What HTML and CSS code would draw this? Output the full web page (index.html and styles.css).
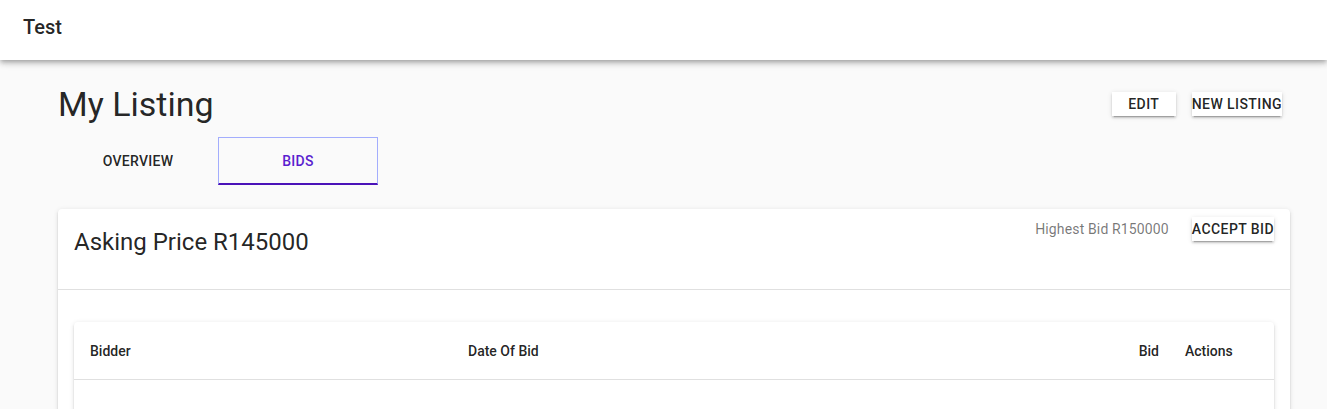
FILE: index.html
```html
<!DOCTYPE html>
<html lang="en">
<head>
<meta charset="utf-8">
<title>Test</title>
<link rel="stylesheet" href="styles.css">
</head>
<body>
<header class="app-bar">
  <div class="app-title">Test</div>
</header>
<main class="page">
  <div class="page-head">
    <h1 class="page-title">My Listing</h1>
    <div class="head-actions">
      <button class="btn btn-edit">Edit</button>
      <button class="btn">New Listing</button>
    </div>
  </div>
  <nav class="tabs">
    <div class="tab">Overview</div>
    <div class="tab tab-active">Bids</div>
  </nav>
  <section class="card">
    <div class="card-head">
      <h2 class="card-title">Asking Price R145000</h2>
      <div class="card-head-right">
        <span class="highest">Highest Bid R150000</span>
        <button class="btn btn-accept">Accept Bid</button>
      </div>
    </div>
    <div class="card-body">
      <div class="table-card">
        <div class="table-row table-header">
          <div class="cell">Bidder</div>
          <div class="cell">Date Of Bid</div>
          <div class="cell cell-bid">Bid</div>
          <div class="cell">Actions</div>
        </div>
        <div class="table-empty"></div>
      </div>
    </div>
  </section>
</main>
</body>
</html>
```
FILE: styles.css
```css
* { box-sizing: border-box; }
html, body { margin: 0; padding: 0; }
body {
  background: #fafafa;
  font-family: Roboto, "Noto Sans", "Liberation Sans", sans-serif;
  color: rgba(0,0,0,.87);
  overflow: hidden;
  height: 409px;
}
.app-bar {
  height: 60px;
  background: #fff;
  box-shadow: 0 2px 4px -1px rgba(0,0,0,.2), 0 4px 5px 0 rgba(0,0,0,.14), 0 1px 10px 0 rgba(0,0,0,.12);
  padding: 13px 23px 0;
  position: relative;
  z-index: 2;
}
.app-title {
  font-size: 20px;
  font-weight: 500;
  line-height: 28px;
  color: rgba(0,0,0,.87);
}
.page {
  padding: 24px 37px 0 58px;
}
.page-head {
  display: flex;
  justify-content: space-between;
  align-items: flex-start;
}
.page-title {
  margin: 0;
  font-size: 34px;
  font-weight: 400;
  line-height: 40px;
  color: rgba(0,0,0,.87);
}
.head-actions {
  display: flex;
  gap: 16px;
  margin-top: 8px;
  margin-right: 8px;
}
.btn {
  font-family: inherit;
  border: 0;
  background: #fff;
  height: 24px;
  min-width: 64px;
  padding: 0;
  font-size: 14px;
  font-weight: 500;
  text-transform: uppercase;
  letter-spacing: .03em;
  color: rgba(0,0,0,.87);
  box-shadow: 0 3px 1px -2px rgba(0,0,0,.2), 0 2px 2px 0 rgba(0,0,0,.14), 0 1px 5px 0 rgba(0,0,0,.12);
  border-radius: 0;
  display: inline-flex;
  align-items: center;
  justify-content: center;
}
.tabs {
  display: flex;
  margin-top: 13px;
  height: 48px;
}
.tab {
  width: 160px;
  height: 48px;
  display: flex;
  align-items: center;
  justify-content: center;
  font-size: 14px;
  font-weight: 500;
  text-transform: uppercase;
  letter-spacing: .02em;
  color: rgba(0,0,0,.87);
}
.tab-active {
  color: #5a1fcf;
  border: 1px solid #a3adfd;
  border-bottom: 2px solid #4a12b8;
}
.card {
  margin-top: 24px;
  background: #fff;
  border-radius: 4px;
  box-shadow: 0 3px 1px -2px rgba(0,0,0,.2), 0 2px 2px 0 rgba(0,0,0,.14), 0 1px 5px 0 rgba(0,0,0,.12);
  height: 260px;
}
.card-head {
  height: 81px;
  border-bottom: 1px solid rgba(0,0,0,.12);
  display: flex;
  justify-content: space-between;
  align-items: flex-start;
  padding: 0 16px;
}
.card-title {
  margin: 0;
  padding-top: 17px;
  font-size: 24px;
  font-weight: 400;
  line-height: 32px;
}
.card-head-right {
  display: flex;
  align-items: center;
  gap: 23px;
  padding-top: 8px;
}
.highest {
  font-size: 14px;
  color: rgba(0,0,0,.54);
  line-height: 24px;
  letter-spacing: .01em;
}
.btn-accept { min-width: 0; }
.card-body {
  padding: 32px 16px 0;
}
.table-card {
  background: #fff;
  border-radius: 4px;
  box-shadow: 0 3px 1px -2px rgba(0,0,0,.2), 0 2px 2px 0 rgba(0,0,0,.14), 0 1px 5px 0 rgba(0,0,0,.12);
  height: 200px;
}
.table-row {
  display: grid;
  grid-template-columns: 378px 1fr auto 105px;
  height: 58px;
  align-items: center;
  border-bottom: 1px solid rgba(0,0,0,.12);
}
.table-header .cell {
  font-size: 14px;
  font-weight: 500;
  color: rgba(0,0,0,.87);
  padding: 0 16px;
}
.table-header .cell-bid {
  padding-right: 10px;
  text-align: right;
}
```
